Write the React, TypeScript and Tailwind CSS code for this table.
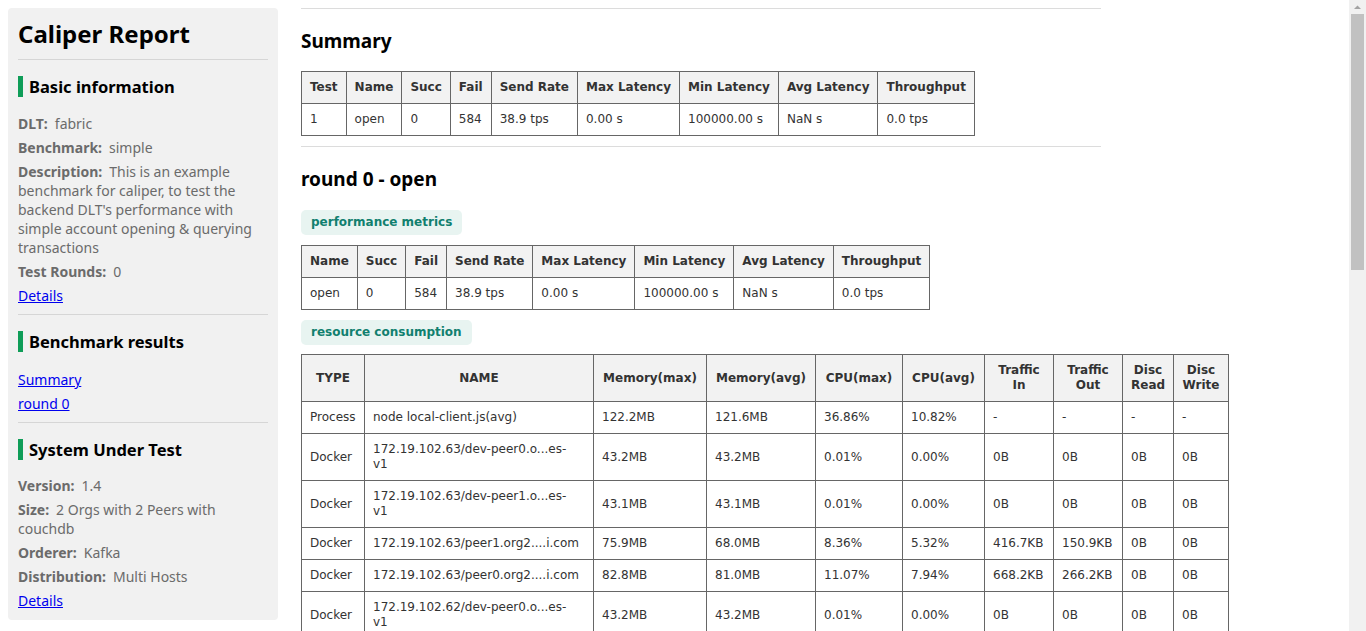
import React from 'react';

const summaryHead = ['Test', 'Name', 'Succ', 'Fail', 'Send Rate', 'Max Latency', 'Min Latency', 'Avg Latency', 'Throughput'];
const summaryRows = [['1', 'open', '0', '584', '38.9 tps', '0.00 s', '100000.00 s', 'NaN s', '0.0 tps']];

const perfHead = ['Name', 'Succ', 'Fail', 'Send Rate', 'Max Latency', 'Min Latency', 'Avg Latency', 'Throughput'];
const perfRows = [['open', '0', '584', '38.9 tps', '0.00 s', '100000.00 s', 'NaN s', '0.0 tps']];

const resHead = ['TYPE', 'NAME', 'Memory(max)', 'Memory(avg)', 'CPU(max)', 'CPU(avg)', 'Traffic In', 'Traffic Out', 'Disc Read', 'Disc Write'];
const resWidths = [63, 229, 113, 109, 87, 82, 69, 69, 51, 55];
// names are cut by caliper; long ones wrap after "es-" in the report
const resRows = [
  ['Process', 'node local-client.js(avg)', '122.2MB', '121.6MB', '36.86%', '10.82%', '-', '-', '-', '-'],
  ['Docker', '172.19.102.63/dev-peer0.o...es-\nv1', '43.2MB', '43.2MB', '0.01%', '0.00%', '0B', '0B', '0B', '0B'],
  ['Docker', '172.19.102.63/dev-peer1.o...es-\nv1', '43.1MB', '43.1MB', '0.01%', '0.00%', '0B', '0B', '0B', '0B'],
  ['Docker', '172.19.102.63/peer1.org2....i.com', '75.9MB', '68.0MB', '8.36%', '5.32%', '416.7KB', '150.9KB', '0B', '0B'],
  ['Docker', '172.19.102.63/peer0.org2....i.com', '82.8MB', '81.0MB', '11.07%', '7.94%', '668.2KB', '266.2KB', '0B', '0B'],
  ['Docker', '172.19.102.62/dev-peer0.o...es-\nv1', '43.2MB', '43.2MB', '0.01%', '0.00%', '0B', '0B', '0B', '0B'],
  ['Docker', '172.19.102.62/dev-peer1.o...es-\nv1', '43.0MB', '43.0MB', '0.01%', '0.00%', '0B', '0B', '0B', '0B'],
  ['Docker', '172.19.102.62/peer1.org1....e.com', '74.3MB', '67.2MB', '7.85%', '5.11%', '402.1KB', '148.3KB', '0B', '0B'],
  ['Docker', '172.19.102.62/peer0.org1....e.com', '80.6MB', '79.4MB', '10.92%', '7.60%', '655.4KB', '261.0KB', '0B', '0B'],
  ['Docker', '172.19.102.62/couchdb3', '96.1MB', '95.8MB', '2.14%', '1.02%', '88.2KB', '64.7KB', '0B', '0B'],
  ['Docker', '172.19.102.62/couchdb2', '95.7MB', '95.3MB', '2.08%', '0.98%', '86.9KB', '63.1KB', '0B', '0B'],
  ['Docker', '172.19.102.63/couchdb1', '96.4MB', '96.0MB', '2.31%', '1.10%', '91.5KB', '66.0KB', '0B', '0B'],
  ['Docker', '172.19.102.63/couchdb0', '96.0MB', '95.6MB', '2.27%', '1.06%', '90.8KB', '65.4KB', '0B', '0B'],
  ['Docker', '172.19.102.61/orderer.example.com', '18.4MB', '18.1MB', '1.45%', '0.62%', '312.6KB', '298.4KB', '0B', '0B'],
  ['Docker', '172.19.102.61/kafka0', '312.5MB', '311.9MB', '3.02%', '1.48%', '140.2KB', '128.7KB', '0B', '0B'],
  ['Docker', '172.19.102.61/zookeeper0', '64.2MB', '64.1MB', '0.35%', '0.12%', '12.4KB', '11.8KB', '0B', '0B'],
];

const cell = "border border-[#666] px-[8px] py-[8px] leading-[15px]";

function DataTable({ head, rows, className = '' }: { head: string[]; rows: string[][]; className?: string }) {
  return (
    <table className={`border-collapse text-[12px] text-[#333] font-['DejaVu_Sans',sans-serif] ${className}`}>
      <thead>
        <tr>
          {head.map((h) => (
            <th key={h} className={`${cell} bg-[#f2f2f2] font-bold text-left whitespace-nowrap`}>{h}</th>
          ))}
        </tr>
      </thead>
      <tbody>
        {rows.map((r, i) => (
          <tr key={i}>
            {r.map((c, j) => (
              <td key={j} className={`${cell} bg-white whitespace-nowrap`}>{c}</td>
            ))}
          </tr>
        ))}
      </tbody>
    </table>
  );
}

function Badge({ children, className = '' }: { children: React.ReactNode; className?: string }) {
  return (
    <div className={`w-fit h-[25px] leading-[25px] px-[10px] rounded-[5px] bg-[#e8f4f1] text-[#11806f] text-[12px] font-bold font-['DejaVu_Sans',sans-serif] ${className}`}>
      {children}
    </div>
  );
}

function SideHeading({ children }: { children: React.ReactNode }) {
  return (
    <h3 className="mt-[16px] flex items-center gap-[6px] text-[16.5px] font-bold leading-[21px] text-black">
      <span className="w-[5px] h-[21px] bg-[#0f9d58]" />
      {children}
    </h3>
  );
}

function Item({ label, value }: { label: string; value: string }) {
  return (
    <li className="mb-[5px] leading-[19px]">
      <span className="font-bold mr-[7px]">{label}</span>
      {value}
    </li>
  );
}

function LinkItem({ children }: { children: React.ReactNode }) {
  return (
    <li className="mb-[5px] leading-[19px]">
      <a href="#" className="text-[#0000ee] underline">{children}</a>
    </li>
  );
}

function Scrollbar() {
  return (
    <div className="fixed top-0 right-0 w-[17px] h-screen bg-[#f1f1f1] flex flex-col items-center">
      <svg width="17" height="14" viewBox="0 0 17 14" className="shrink-0">
        <path d="M5 9 L8.5 5.5 L12 9 Z" fill="#a3a3a3" />
      </svg>
      <div className="w-[13px] h-[256px] bg-[#c1c1c1]" />
    </div>
  );
}

export default function App() {
  return (
    <div className="flex items-start gap-[23px] p-[8px] bg-white font-['Noto_Sans','Open_Sans',sans-serif]">
      <aside className="w-[270px] shrink-0 bg-[#f1f1f1] rounded-[4px] px-[10px] pt-[10px] pb-[5px]">
        <h1 className="text-[24px] font-bold leading-[32px] text-black">Caliper Report</h1>
        <div className="mt-[9px] border-t border-[#d6d6d6]" />

        <SideHeading>Basic information</SideHeading>
        <ul className="mt-[17px] pb-[4px] text-[14px] text-[#6b6b6b] border-b border-[#d6d6d6]">
          <Item label="DLT:" value="fabric" />
          <Item label="Benchmark:" value="simple" />
          <Item label="Description:" value="This is an example benchmark for caliper, to test the backend DLT's performance with simple account opening & querying transactions" />
          <Item label="Test Rounds:" value="0" />
          <LinkItem>Details</LinkItem>
        </ul>

        <SideHeading>Benchmark results</SideHeading>
        <ul className="mt-[18px] pb-[4px] text-[14px] border-b border-[#d6d6d6]">
          <LinkItem>Summary</LinkItem>
          <LinkItem>round 0</LinkItem>
        </ul>

        <SideHeading>System Under Test</SideHeading>
        <ul className="mt-[16px] text-[14px] text-[#6b6b6b]">
          <Item label="Version:" value="1.4" />
          <Item label="Size:" value="2 Orgs with 2 Peers with couchdb" />
          <Item label="Orderer:" value="Kafka" />
          <Item label="Distribution:" value="Multi Hosts" />
          <LinkItem>Details</LinkItem>
        </ul>
      </aside>

      <main className="flex flex-col items-start pb-[40px]">
        <div className="w-[800px] border-t border-[#dcdcdc]" />
        <h2 className="mt-[20px] mb-[18px] text-[19px] font-bold leading-[24px] text-black">Summary</h2>
        <DataTable head={summaryHead} rows={summaryRows} />
        <div className="mt-[10px] w-[800px] border-t border-[#dcdcdc]" />

        <h2 className="mt-[20px] mb-[19px] text-[19px] font-bold leading-[24px] text-black">round 0 - open</h2>
        <Badge>performance metrics</Badge>
        <DataTable head={perfHead} rows={perfRows} className="mt-[10px]" />
        <Badge className="mt-[10px]">resource consumption</Badge>
        <table className="mt-[9px] table-fixed w-[927px] border-collapse text-[12px] text-[#333] font-['DejaVu_Sans',sans-serif]">
          <colgroup>
            {resWidths.map((w, i) => (
              <col key={i} style={{ width: w }} />
            ))}
          </colgroup>
          <thead>
            <tr>
              {resHead.map((h) => (
                <th key={h} className={`${cell} bg-[#f2f2f2] font-bold text-center`}>{h}</th>
              ))}
            </tr>
          </thead>
          <tbody>
            {resRows.map((r, i) => (
              <tr key={i}>
                {r.map((c, j) => (
                  <td key={j} className={`${cell} bg-white text-left whitespace-pre-line`}>{c}</td>
                ))}
              </tr>
            ))}
          </tbody>
        </table>
        <div className="mt-[11px] w-[800px] border-t border-[#dcdcdc]" />
        <h2 className="mt-[20px] mb-[12px] text-[19px] font-bold leading-[24px] text-black">Test Environment</h2>
        <p className="text-[14px] text-[#333] leading-[20px]">benchmark config: config.yaml</p>
      </main>
      <Scrollbar />
    </div>
  );
}
